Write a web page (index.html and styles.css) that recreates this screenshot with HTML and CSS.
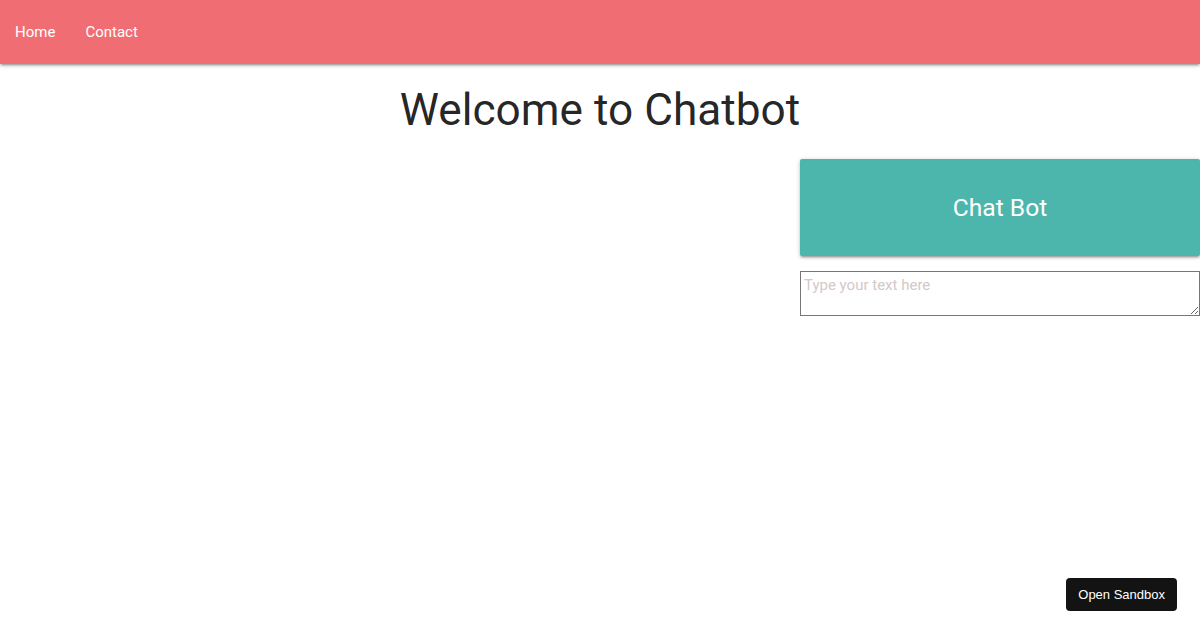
FILE: index.html
```html
<!DOCTYPE html>
<html lang="en">
<head>
  <meta charset="UTF-8" />
  <meta name="viewport" content="width=device-width, initial-scale=1.0"/>
  <title>Chatbot</title>
  <link rel="stylesheet" href="styles.css">
</head>
<body>
  <nav class="navbar">
    <a href="#">Home</a>
    <a href="#">Contact</a>
  </nav>

  <h1 class="title">Welcome to Chatbot</h1>

  <div class="layout">
    <div class="spacer"></div>
    <div class="chat">
      <div class="chat-header">Chat Bot</div>
      <textarea class="chat-input" placeholder="Type your text here"></textarea>
    </div>
  </div>

  <button class="sandbox-btn">Open Sandbox</button>
</body>
</html>
```

FILE: styles.css
```css
html {
  font-size: 15px;
}

body {
  margin: 0;
  font-family: Roboto, 'Noto Sans', sans-serif;
  color: rgba(0, 0, 0, 0.87);
  background: #ffffff;
}

.navbar {
  display: flex;
  align-items: center;
  height: 64px;
  background-color: #f06e73;
  box-shadow: 0 2px 2px 0 rgba(0, 0, 0, 0.14), 0 3px 1px -2px rgba(0, 0, 0, 0.12), 0 1px 5px 0 rgba(0, 0, 0, 0.2);
}

.navbar a {
  color: #ffffff;
  text-decoration: none;
  font-size: 15px;
  padding: 0 15px;
  line-height: 64px;
}

.title {
  font-weight: 400;
  font-size: 44.2px;
  line-height: 48px;
  text-align: center;
  margin: 22px 0 17px;
}

.layout {
  display: grid;
  grid-template-columns: 2fr 1fr;
}

.chat {
  padding-top: 8px;
}

.chat-header {
  display: flex;
  align-items: center;
  justify-content: center;
  height: 97px;
  background-color: #4db6ac;
  color: #ffffff;
  font-size: 24.6px;
  border-radius: 2px;
  box-shadow: 0 2px 2px 0 rgba(0, 0, 0, 0.14), 0 3px 1px -2px rgba(0, 0, 0, 0.12), 0 1px 5px 0 rgba(0, 0, 0, 0.2);
}

.chat-input {
  display: block;
  box-sizing: border-box;
  width: 100%;
  height: 45px;
  margin-top: 15px;
  padding: 4px 3px;
  border: 1px solid #767676;
  font-family: Roboto, sans-serif;
  font-size: 15px;
}

.chat-input::placeholder {
  color: #d4c8c8;
}

.sandbox-btn {
  position: fixed;
  right: 23px;
  bottom: 19px;
  height: 33px;
  padding: 0 12px;
  background-color: #131313;
  color: #ffffff;
  border: none;
  border-radius: 4px;
  font-family: 'Liberation Sans', Arial, sans-serif;
  font-size: 13px;
}
```
